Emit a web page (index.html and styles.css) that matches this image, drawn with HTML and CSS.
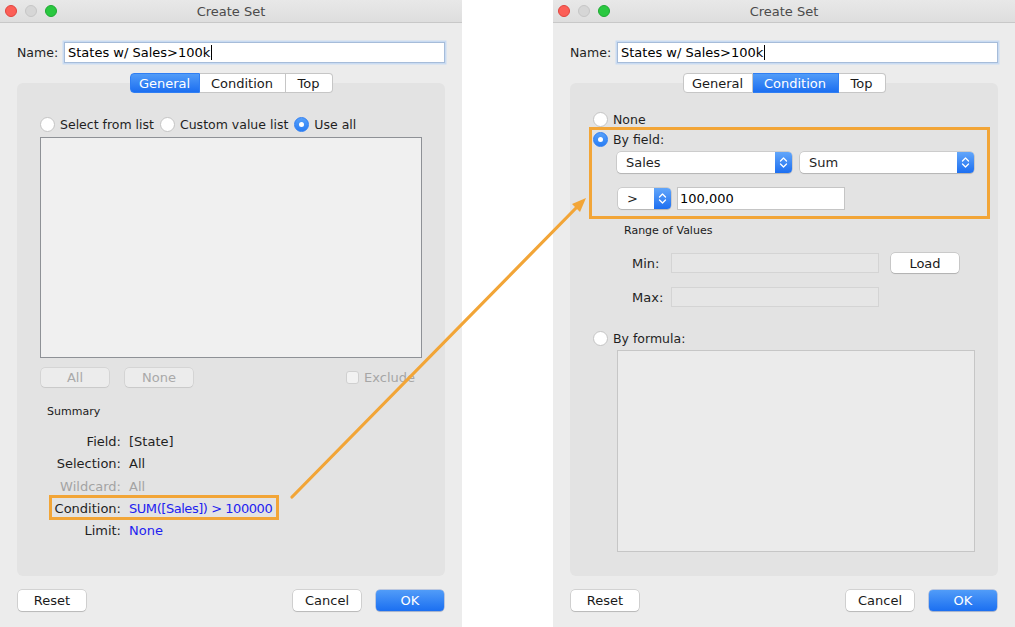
FILE: index.html
```html
<!DOCTYPE html>
<html>
<head>
<meta charset="utf-8">
<link rel="stylesheet" href="styles.css">
</head>
<body>
<div class="stage">
  <div class="window">
    <div class="titlebar">
      <div class="lights"><span class="light red"></span><span class="light off"></span><span class="light green"></span></div>
      <div class="title">Create Set</div>
      <div></div>
    </div>
    <div class="name-row"><span class="name-label">Name:</span><div class="name-input">States w/ Sales&gt;100k<span class="caret"></span></div></div>
    <div class="tabs"><span class="tab t-gen active">General</span><span class="tab t-cond">Condition</span><span class="tab t-top">Top</span></div>
    <div class="panel panel-general">
      <div class="radio-row">
        <span class="radio"></span><span class="rlabel">Select from list</span>
        <span class="radio"></span><span class="rlabel">Custom value list</span>
        <span class="radio on"></span><span class="rlabel">Use all</span>
      </div>
      <div class="listbox"></div>
      <div class="list-buttons">
        <span class="btn small disabled b-all">All</span>
        <span class="btn small disabled b-none">None</span>
        <span class="exclude"><span class="checkbox"></span>Exclude</span>
      </div>
      <div class="section-label">Summary</div>
      <div class="summary">
        <div class="srow"><span class="sk">Field:</span><span class="sv">[State]</span></div>
        <div class="srow"><span class="sk">Selection:</span><span class="sv">All</span></div>
        <div class="srow dim"><span class="sk">Wildcard:</span><span class="sv">All</span></div>
        <div class="srow hl"><span class="sk">Condition:</span><span class="sv blue tight">SUM([Sales]) &gt; 100000</span></div>
        <div class="srow"><span class="sk">Limit:</span><span class="sv blue">None</span></div>
      </div>
    </div>
    <div class="footer"><span class="btn">Reset</span><span class="spacer"></span><span class="btn">Cancel</span><span class="btn primary">OK</span></div>
  </div>

  <div class="window">
    <div class="titlebar">
      <div class="lights"><span class="light red"></span><span class="light off"></span><span class="light green"></span></div>
      <div class="title">Create Set</div>
      <div></div>
    </div>
    <div class="name-row"><span class="name-label">Name:</span><div class="name-input">States w/ Sales&gt;100k<span class="caret"></span></div></div>
    <div class="tabs"><span class="tab t-gen">General</span><span class="tab t-cond active">Condition</span><span class="tab t-top">Top</span></div>
    <div class="panel panel-cond">
      <div class="radio-row"><span class="radio"></span><span class="rlabel">None</span></div>
      <div class="field-box">
        <div class="radio-row"><span class="radio on"></span><span class="rlabel">By field:</span></div>
        <div class="dd-row">
          <div class="dropdown dd-sales"><span class="dd-text">Sales</span><span class="stepper"><svg width="17" height="21" viewBox="0 0 17 21"><path d="M5.5 9 L8.5 6 L11.5 9 M5.5 12 L8.5 15 L11.5 12" fill="none" stroke="#fff" stroke-width="1.3" stroke-linecap="round" stroke-linejoin="round"/></svg></span></div>
          <div class="dropdown dd-sum"><span class="dd-text">Sum</span><span class="stepper"><svg width="17" height="21" viewBox="0 0 17 21"><path d="M5.5 9 L8.5 6 L11.5 9 M5.5 12 L8.5 15 L11.5 12" fill="none" stroke="#fff" stroke-width="1.3" stroke-linecap="round" stroke-linejoin="round"/></svg></span></div>
        </div>
        <div class="op-row">
          <div class="dropdown dd-op"><span class="dd-text">&gt;</span><span class="stepper"><svg width="17" height="21" viewBox="0 0 17 21"><path d="M5.5 9 L8.5 6 L11.5 9 M5.5 12 L8.5 15 L11.5 12" fill="none" stroke="#fff" stroke-width="1.3" stroke-linecap="round" stroke-linejoin="round"/></svg></span></div>
          <div class="text-input">100,000</div>
        </div>
      </div>
      <div class="section-label range-label">Range of Values</div>
      <div class="mm-row mm-min"><span class="mm-label">Min:</span><span class="mm-input"></span><span class="btn load">Load</span></div>
      <div class="mm-row mm-max"><span class="mm-label">Max:</span><span class="mm-input"></span></div>
      <div class="radio-row formula-row"><span class="radio"></span><span class="rlabel">By formula:</span></div>
      <div class="formula"></div>
    </div>
    <div class="footer"><span class="btn">Reset</span><span class="spacer"></span><span class="btn">Cancel</span><span class="btn primary">OK</span></div>
  </div>

  <svg class="arrow" width="1015" height="627" viewBox="0 0 1015 627">
    <line x1="292" y1="497" x2="578" y2="206" stroke="#f2a537" stroke-width="3.2" stroke-linecap="round"/>
    <polygon points="586,198 580,212 572,204" fill="#f2a537"/>
  </svg>
</div>
</body>
</html>
```
FILE: styles.css
```css
*, *::before, *::after { box-sizing: border-box; margin: 0; padding: 0; }
body {
  margin: 0;
  background: #ffffff;
  font-family: "DejaVu Sans", "Liberation Sans", sans-serif;
  font-size: 12.5px;
  color: #1f1f1f;
  width: 1015px;
  height: 627px;
  overflow: hidden;
}
.stage {
  position: relative;
  display: flex;
  gap: 91px;
  width: 1015px;
  height: 627px;
}
.window {
  width: 462px;
  height: 627px;
  background: #ececec;
  display: flex;
  flex-direction: column;
}
.titlebar {
  height: 23px;
  display: grid;
  grid-template-columns: 1fr auto 1fr;
  align-items: center;
  background: linear-gradient(#e8e8e8, #dedede);
  border-bottom: 1px solid #c8c8c8;
}
.lights { display: flex; gap: 8px; padding-left: 5px; }
.light { width: 12px; height: 12px; border-radius: 50%; }
.light.red { background: #fc5f57; border: 0.5px solid #e0443e; }
.light.off { background: #d6d6d6; border: 0.5px solid #c6c6c6; }
.light.green { background: #2ac840; border: 0.5px solid #1ea932; }
.title { color: #4b4b4b; font-size: 13px; }

.name-row {
  margin: 19px 17px 0 17px;
  display: flex;
  align-items: center;
}
.name-label { width: 47px; }
.name-input {
  width: 381px;
  height: 21px;
  background: #fff;
  border: 1px solid #a6bcd9;
  box-shadow: 0 0 0 1.5px #c9dbf2;
  padding-left: 3px;
  line-height: 19px;
  font-size: 13px;
  color: #000;
  display: flex;
  align-items: center;
}
.caret { display: inline-block; width: 1px; height: 15px; background: #000; margin-left: 1px; }

.tabs {
  margin-top: 10px;
  margin-bottom: -10px;
  height: 20px;
  display: flex;
  justify-content: center;
  position: relative;
  z-index: 1;
}
.tab {
  height: 20px;
  line-height: 19px;
  background: #fff;
  border: 1px solid #c6c6c6;
  border-left: none;
  text-align: center;
  font-size: 13px;
  color: #1a1a1a;
}
.t-gen { width: 70px; border-left: 1px solid #c6c6c6; border-radius: 4px 0 0 4px; }
.t-cond { width: 86px; }
.t-top { width: 47px; border-radius: 0 4px 4px 0; }
.tab.active {
  background: linear-gradient(#519cf8, #1c6ff1);
  color: #fff;
  border-color: #2f7ef3;
}

.panel {
  margin: 0 17px;
  height: 493px;
  background: #e3e3e3;
  border-radius: 6px;
}
.panel-general { padding: 34px 0 0 23px; }
.panel-cond { padding: 29px 0 0 23px; }

.radio-row { display: flex; align-items: center; height: 15px; }
.radio {
  width: 15px; height: 15px; border-radius: 50%;
  background: #fff;
  border: 1px solid #c4c4c4;
  flex: none;
  position: relative;
}
.radio.on {
  background: linear-gradient(#56a0fa, #2a7ef4);
  border-color: #2f7ef3;
}
.radio.on::after {
  content: "";
  position: absolute;
  left: 4px; top: 4px;
  width: 5px; height: 5px;
  border-radius: 50%;
  background: #fff;
}
.rlabel { margin-left: 5px; margin-right: 6px; white-space: nowrap; }

.listbox {
  margin-top: 5px;
  width: 382px;
  height: 221px;
  background: #f0f0f0;
  border: 1px solid #8e9196;
}
.list-buttons {
  margin-top: 10px;
  width: 382px;
  display: flex;
  align-items: center;
}
.btn {
  display: inline-flex;
  align-items: center;
  justify-content: center;
  width: 68px;
  height: 21px;
  background: #fff;
  border-radius: 4px;
  box-shadow: 0 0 0 0.5px rgba(0,0,0,0.22), 0 1px 1px rgba(0,0,0,0.12);
  font-size: 13px;
  color: #1a1a1a;
}
.btn.small { height: 19px; }
.btn.disabled { background: #ececec; color: #a9a9a9; box-shadow: 0 0 0 0.5px rgba(0,0,0,0.12), 0 1px 1px rgba(0,0,0,0.06); }
.b-all { margin-left: 1px; }
.b-none { margin-left: 16px; }
.exclude {
  margin-left: auto;
  margin-right: 7px;
  display: flex;
  align-items: center;
  color: #a6a6a6;
  font-size: 13px;
}
.checkbox {
  width: 13px; height: 13px;
  border-radius: 3px;
  background: #f2f2f2;
  border: 1px solid #d0d0d0;
  margin-right: 5px;
}

.section-label { font-size: 11px; line-height: 14px; color: #1a1a1a; }
.panel-general .section-label { margin-top: 18px; margin-left: 7px; }
.summary { margin-top: 12px; }
.srow {
  display: grid;
  grid-template-columns: 81px auto;
  column-gap: 8px;
  height: 22.3px;
  line-height: 22px;
  font-size: 13px;
  position: relative;
}
.sk { text-align: right; }
.srow.dim { color: #a3a3a3; }
.blue { color: #1e22f0; }
.tight { letter-spacing: -0.45px; }
.srow.hl::after {
  content: "";
  position: absolute;
  left: 9px;
  top: -3px;
  width: 230px;
  height: 25px;
  border: 3px solid #f2a537;
}

.field-box {
  margin-left: -4px;
  width: 401px;
  border: 3px solid #f2a537;
  padding: 2px 0 6px 1px;
}
.dd-row { margin-top: 5px; margin-left: 24px; display: flex; gap: 8px; }
.dropdown {
  height: 21px;
  background: #fff;
  border-radius: 4px;
  box-shadow: 0 0 0 0.5px rgba(0,0,0,0.2), 0 1px 1px rgba(0,0,0,0.12);
  display: flex;
  align-items: center;
  font-size: 13px;
}
.dd-text { flex: 1; padding-left: 9px; }
.stepper {
  width: 17px;
  height: 21px;
  border-radius: 0 4px 4px 0;
  background: linear-gradient(#62a6fa, #1d6ff1);
  display: flex;
}
.dd-sales { width: 175px; }
.dd-sum { width: 174px; }
.op-row { margin-top: 14px; margin-left: 25px; display: flex; align-items: center; gap: 6px; }
.dd-op { width: 53px; }
.text-input {
  width: 168px;
  height: 23px;
  background: #fff;
  border: 1px solid #c5c5c5;
  padding-left: 2px;
  line-height: 21px;
  font-size: 13px;
  color: #000;
}
.range-label { margin-top: 5px; margin-left: 31px; }
.mm-row { display: flex; align-items: center; height: 20px; }
.mm-min { margin-top: 15px; }
.mm-max { margin-top: 14px; }
.mm-label { width: 78px; padding-left: 39px; font-size: 13px; }
.mm-input {
  width: 208px;
  height: 20px;
  background: #e6e6e6;
  border: 1px solid #d4d4d4;
}
.load { margin-left: 12px; height: 20px; }
.formula-row { margin-top: 24px; }
.formula {
  margin-top: 4px;
  margin-left: 24px;
  width: 358px;
  height: 202px;
  background: #ebebeb;
  border: 1px solid #c6c6c6;
}

.footer {
  padding: 14px 18px 0 18px;
  display: flex;
  gap: 15px;
}
.spacer { flex: 1; }
.btn.primary {
  background: linear-gradient(#519cf8, #1b6ff1);
  color: #fff;
  box-shadow: 0 0 0 0.5px rgba(0,60,180,0.4), 0 1px 1px rgba(0,0,0,0.12);
}

.arrow {
  position: absolute;
  left: 0;
  top: 0;
  pointer-events: none;
}
```
